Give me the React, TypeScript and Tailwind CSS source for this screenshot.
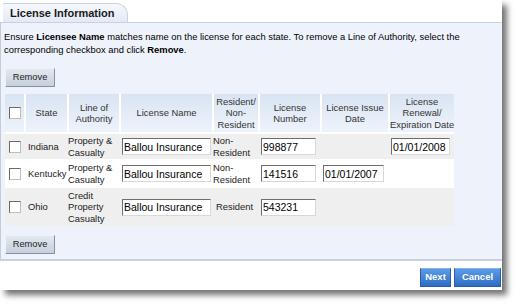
import React from 'react'

const font = "font-['Liberation_Sans',Arial,Helvetica,sans-serif]"

const Box = () => (
  <span className="block w-[12px] h-[12px] bg-white border border-t-[#6a6a6a] border-l-[#6a6a6a] border-b-[#bdbdbd] border-r-[#bdbdbd]" />
)

const Field = ({ value, className }: { value: string; className: string }) => (
  <input
    readOnly
    defaultValue={value}
    className={`block h-[17px] px-[1px] bg-white text-[10.5px] text-black outline-none border border-t-[#6e6e6e] border-l-[#6e6e6e] border-b-[#d8d8d8] border-r-[#d8d8d8] ${font} ${className}`}
  />
)

const RemoveButton = () => (
  <button className="block w-[50px] h-[19px] text-[9.3px] text-[#1e1e1e] bg-linear-to-b from-[#e3e9f0] to-[#c6d0dc] border border-t-[#eef1f5] border-l-[#eef1f5] border-b-[#8793a3] border-r-[#8793a3]">
    Remove
  </button>
)

const headers: string[][] = [
  [],
  ['State'],
  ['Line of', 'Authority'],
  ['License Name'],
  ['Resident/', 'Non-', 'Resident'],
  ['License', 'Number'],
  ['License Issue', 'Date'],
  ['License', 'Renewal/', 'Expiration Date'],
]

type Row = {
  state: string
  loa: string[]
  res: string[]
  num: string
  issue?: string
  exp?: string
  height: string
  bg: string
}

const rows: Row[] = [
  { state: 'Indiana', loa: ['Property &', 'Casualty'], res: ['Non-', 'Resident'], num: '998877', exp: '01/01/2008', height: 'h-[26px]', bg: 'bg-[#efefef]' },
  { state: 'Kentucky', loa: ['Property &', 'Casualty'], res: ['Non-', 'Resident'], num: '141516', issue: '01/01/2007', height: 'h-[29px]', bg: 'bg-white' },
  { state: 'Ohio', loa: ['Credit', 'Property', 'Casualty'], res: ['Resident'], num: '543231', height: 'h-[38px]', bg: 'bg-[#efefef]' },
]

const Lines = ({ lines }: { lines: string[] }) => (
  <>
    {lines.map((l, i) => (
      <div key={i} className="whitespace-nowrap">
        {l}
      </div>
    ))}
  </>
)

export default function App() {
  return (
    <div className={`w-[520px] h-[307px] bg-white ${font}`}>
      <div className="w-[502px] h-[290px] bg-white flex flex-col shadow-[5px_5px_6px_rgba(0,0,0,0.55)]">
        {/* Tab */}
        <div className="h-[22px] flex items-end pl-[3px]">
          <div className="w-[125px] h-[19px] flex items-center pl-[7px] rounded-tr-[12px] bg-linear-to-b from-[#f6f8fc] to-[#e3eaf5] border-t border-r border-[#c9d4e3]">
            <span className="text-[11px] font-bold text-[#1a1a1a]">License Information</span>
          </div>
        </div>

        {/* Panel */}
        <div className="flex flex-col px-[4px] pt-[7px] pb-[5px] bg-[#eef3fb] border-t border-t-[#c6d2e3] border-l border-l-[#c4ccd8] border-b-2 border-b-[#c8d2e0]">
          <p className="text-[9.4px] leading-[13px] text-black -ml-[1px]">
            Ensure <b>Licensee Name</b> matches name on the license for each state. To remove a Line of Authority, select the corresponding checkbox and click <b>Remove</b>.
          </p>

          <div className="mt-[12px]">
            <RemoveButton />
          </div>

          <table className="mt-[7px] w-[449px] table-fixed border-collapse text-[9.4px] leading-[11.5px] text-[#222]">
            <colgroup>
              <col className="w-[20px]" />
              <col className="w-[43px]" />
              <col className="w-[52px]" />
              <col className="w-[93px]" />
              <col className="w-[46px]" />
              <col className="w-[62px]" />
              <col className="w-[68px]" />
              <col className="w-[65px]" />
            </colgroup>
            <thead>
              <tr className="h-[39px]">
                {headers.map((h, i) => (
                  <th
                    key={i}
                    className="p-0 font-normal text-center align-middle text-[#333] bg-linear-to-b from-[#d9e4f3] to-[#eef3fb] border-r-2 border-b-2 border-white last:border-r-0"
                  >
                    {i === 0 ? (
                      <div className="flex justify-center">
                        <Box />
                      </div>
                    ) : (
                      <Lines lines={h} />
                    )}
                  </th>
                ))}
              </tr>
            </thead>
            <tbody>
              {rows.map((r) => (
                <tr key={r.state} className={`${r.height} ${r.bg}`}>
                  <td className="p-0 align-middle">
                    <div className="flex justify-center">
                      <Box />
                    </div>
                  </td>
                  <td className="py-0 pl-[3px] align-middle whitespace-nowrap">{r.state}</td>
                  <td className="p-0 align-middle">
                    <Lines lines={r.loa} />
                  </td>
                  <td className="py-0 pl-[2px] align-middle">
                    <Field value="Ballou Insurance" className="w-[89px]" />
                  </td>
                  <td className={`py-0 align-middle ${r.res.length === 1 ? 'pl-[3px]' : 'pl-0'}`}>
                    <Lines lines={r.res} />
                  </td>
                  <td className="py-0 pl-[2px] align-middle">
                    <Field value={r.num} className="w-[55px]" />
                  </td>
                  <td className="py-0 pl-[2px] align-middle">
                    {r.issue && <Field value={r.issue} className="w-[61px]" />}
                  </td>
                  <td className="py-0 pl-[2px] align-middle">
                    {r.exp && <Field value={r.exp} className="w-[59px]" />}
                  </td>
                </tr>
              ))}
            </tbody>
          </table>

          <div className="mt-[9px]">
            <RemoveButton />
          </div>
        </div>

        {/* Footer */}
        <div className="flex justify-end gap-[3px] pt-[7px] pr-[1px]">
          <button className="w-[31px] h-[19px] text-[9.5px] font-bold text-white bg-linear-to-b from-[#5c9ce6] to-[#2f6cc5] border border-[#2a5dab] border-t-[#7fb1ec]">
            Next
          </button>
          <button className="w-[47px] h-[19px] text-[9.5px] font-bold text-white bg-linear-to-b from-[#5c9ce6] to-[#2f6cc5] border border-[#2a5dab] border-t-[#7fb1ec]">
            Cancel
          </button>
        </div>
      </div>
    </div>
  )
}
